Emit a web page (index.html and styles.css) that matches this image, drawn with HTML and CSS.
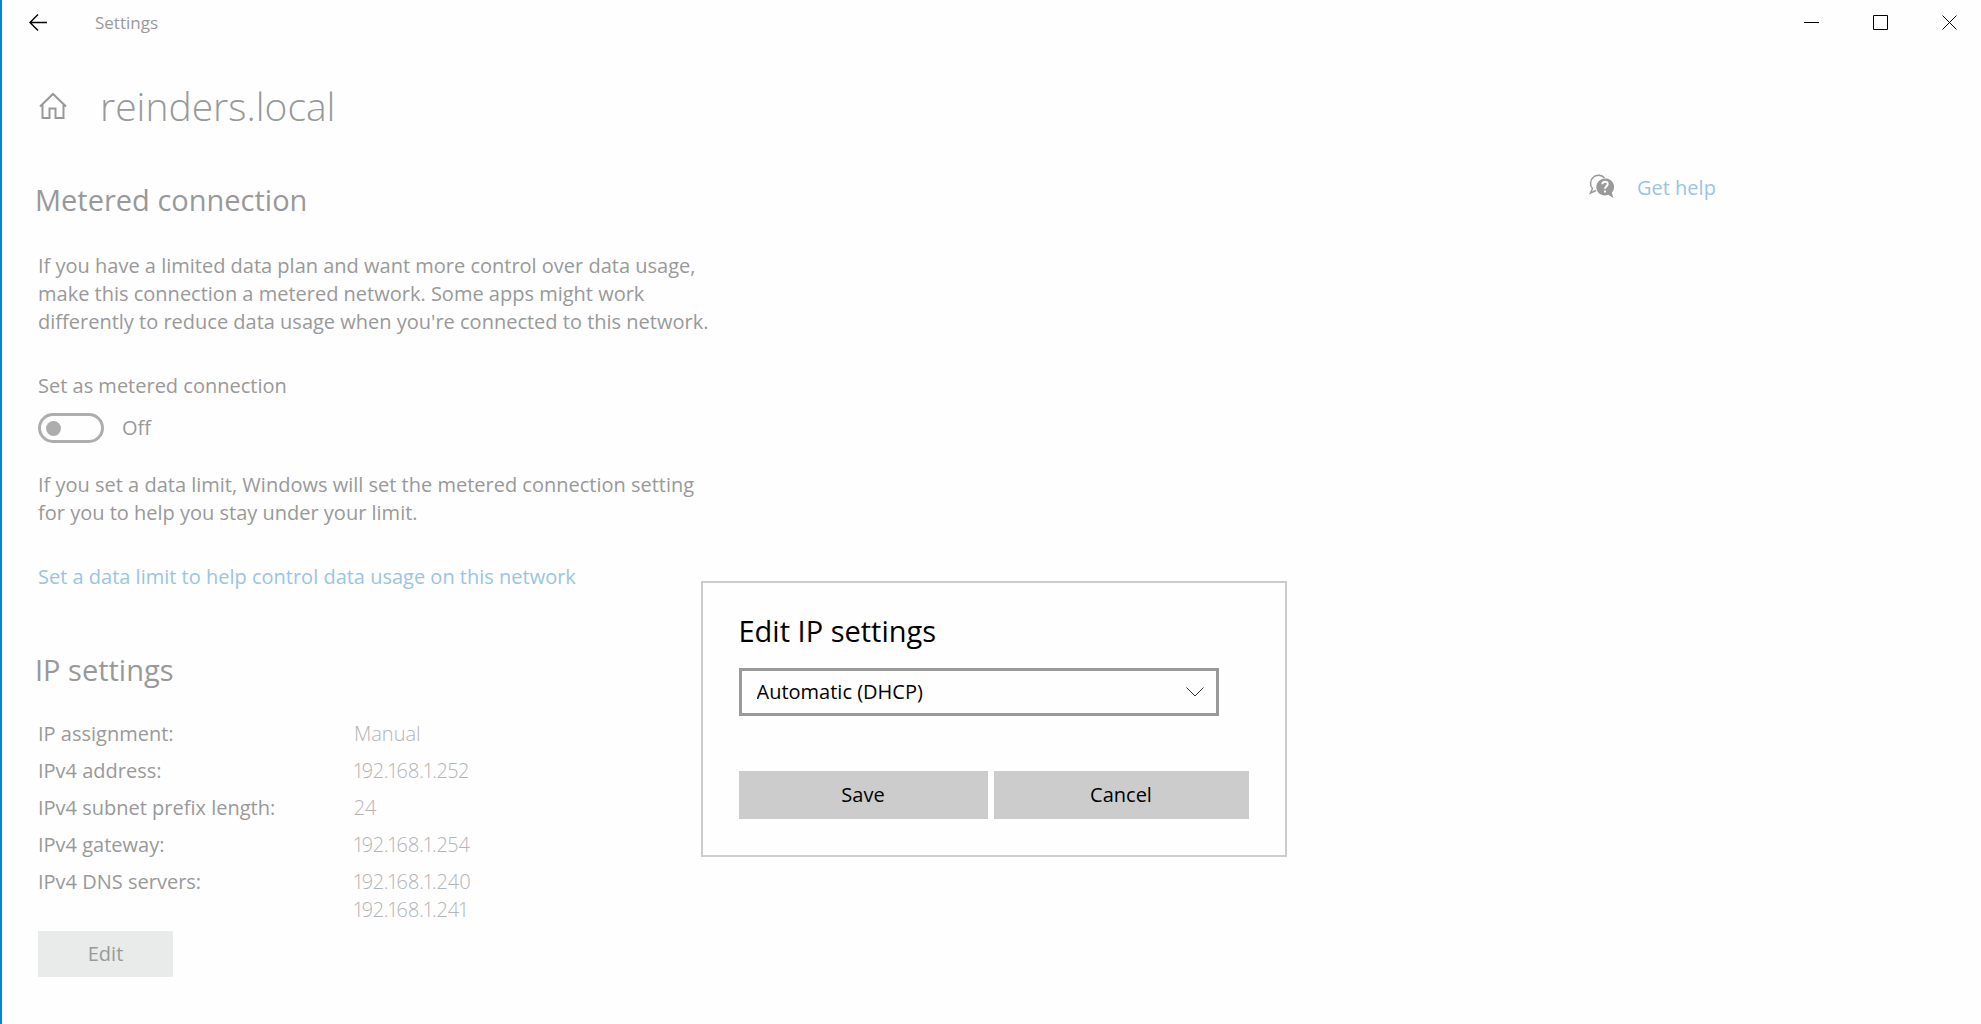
FILE: index.html
```html
<!DOCTYPE html>
<html lang="en">
<head>
<meta charset="utf-8">
<meta name="viewport" content="width=device-width, initial-scale=1">
<title>Settings</title>
<link rel="stylesheet" href="styles.css">
</head>
<body>
<div class="window">
  <header class="titlebar">
    <button class="back" type="button" aria-label="Back">
      <svg width="20" height="20" viewBox="0 0 20 20"><path d="M19 9.5H2M10 1.5L2 9.5l8 8"/></svg>
    </button>
    <span class="app-name">Settings</span>
    <div class="controls">
      <button type="button" aria-label="Minimize"><svg width="16" height="16" viewBox="0 0 16 16"><path d="M0 7.5h15"/></svg></button>
      <button type="button" aria-label="Maximize"><svg width="16" height="16" viewBox="0 0 16 16"><path d="M.5.5h14v14H.5z"/></svg></button>
      <button type="button" aria-label="Close"><svg width="16" height="16" viewBox="0 0 16 16"><path d="M.5.5l14 14M14.500.5l-14 14"/></svg></button>
    </div>
  </header>

  <div class="page-head">
    <svg class="home" width="28" height="28" viewBox="0 0 28 28"><path d="M1 14.500L14 2l13 12.500M3.500 12.500V26h7V16.500h6V26h8V12.500"/></svg>
    <h1>reinders.local</h1>
  </div>

  <div class="body">
    <main>
      <section class="metered">
        <h2>Metered connection</h2>
        <p>If you have a limited data plan and want more control over data usage,<br>make this connection a metered network. Some apps might work<br>differently to reduce data usage when you're connected to this network.</p>
        <div class="toggle-field">
          <label for="metered">Set as metered connection</label>
          <div class="toggle-row">
            <input class="toggle" id="metered" type="checkbox" role="switch">
            <span>Off</span>
          </div>
        </div>
        <p>If you set a data limit, Windows will set the metered connection setting<br>for you to help you stay under your limit.</p>
        <a class="data-limit" href="#">Set a data limit to help control data usage on this network</a>
      </section>

      <section class="ip">
        <h2>IP settings</h2>
        <dl>
          <dt>IP assignment:</dt><dd>Manual</dd>
          <dt>IPv4 address:</dt><dd>192.168.1.252</dd>
          <dt>IPv4 subnet prefix length:</dt><dd>24</dd>
          <dt>IPv4 gateway:</dt><dd>192.168.1.254</dd>
          <dt>IPv4 DNS servers:</dt><dd>192.168.1.240<br>192.168.1.241</dd>
        </dl>
        <button class="edit" type="button">Edit</button>
      </section>
    </main>

    <aside class="help">
      <svg width="25" height="25" viewBox="0 0 25 25">
        <path class="outline" d="M7 16.500L1.500 19l2-4.500A7.500 7.500 0 1 1 15.500 4"/>
        <path class="solid" d="M16 4.500a8.500 8.500 0 1 0 3.200 16.300L24.500 24l-1.700-5.300A8.500 8.500 0 0 0 16 4.500z"/>
        <path class="mark" d="M13.300 10.300c.2-3.600 5.600-3.400 5.400-.1-.1 2-2.700 2-2.700 4.600"/>
        <path class="mark" d="M16 16.500v2"/>
      </svg>
      <a href="#">Get help</a>
    </aside>
  </div>
</div>

<div class="dialog" role="dialog" aria-labelledby="dialog-title">
  <h2 id="dialog-title">Edit IP settings</h2>
  <div class="select-wrap">
    <select aria-labelledby="dialog-title">
      <option>Automatic (DHCP)</option>
      <option>Manual</option>
    </select>
    <svg width="18" height="12" viewBox="0 0 18 12"><path d="M.5 1.500l8.500 8.500 8.500-8.500"/></svg>
  </div>
  <div class="actions">
    <button type="button">Save</button>
    <button type="button">Cancel</button>
  </div>
</div>
</body>
</html>
```

FILE: styles.css
```css
* {
  box-sizing: border-box;
}

body {
  margin: 0;
  background: #fefefe;
  color: #999;
  font: 20px/28px "Open Sans", "Noto Sans", sans-serif;
}

h1, h2, p, dl, dd {
  margin: 0;
}

h2 {
  font-size: 29px;
  line-height: 40px;
  font-weight: 400;
}

a {
  color: #9bc4e2;
  text-decoration: none;
}

button, select {
  font: inherit;
  border: 0;
  border-radius: 0;
}

svg {
  display: block;
  fill: none;
}

.window {
  min-height: 100vh;
  border-left: 2px solid #0086d0;
}

.titlebar {
  display: flex;
  align-items: center;
  height: 45px;
}

.titlebar button {
  display: flex;
  align-items: center;
  justify-content: center;
  width: 62px;
  height: 44px;
  padding: 0;
  background: none;
  stroke: #000;
}

.titlebar .back {
  width: 72px;
}

.back svg {
  stroke-width: 1.4;
}

.app-name {
  margin-left: 21px;
  font-size: 17px;
}

.controls {
  display: flex;
  gap: 7px;
  margin-left: auto;
}

.page-head {
  display: flex;
  align-items: center;
  gap: 33px;
  padding: 33px 37px 0;
}

.home {
  stroke: #999;
  stroke-width: 2;
}

h1 {
  font-size: 39px;
  line-height: 56px;
  font-weight: 300;
}

.body {
  display: grid;
  grid-template-columns: 1fr 392px;
  padding: 40px 0 32px 36px;
}

main {
  padding-top: 6px;
}

main h2 {
  margin-left: -3px;
}

.metered {
  display: flex;
  flex-direction: column;
  align-items: flex-start;
}

.metered h2 {
  margin-bottom: 32px;
}

.toggle-field {
  margin: 36px 0 28px;
}

.toggle-row {
  display: flex;
  align-items: center;
  gap: 18px;
  margin-top: 13px;
}

.toggle {
  appearance: none;
  display: flex;
  align-items: center;
  width: 66px;
  height: 30px;
  margin: 0;
  padding-left: 5px;
  border: 3px solid #adadad;
  border-radius: 15px;
}

.toggle::before {
  content: "";
  width: 15px;
  height: 15px;
  border-radius: 50%;
  background: #adadad;
}

.data-limit {
  margin-top: 36px;
}

.ip h2 {
  margin-top: 59px;
  margin-bottom: 30px;
}

dl {
  display: grid;
  grid-template-columns: 316px 1fr;
  row-gap: 9px;
}

dd {
  color: #b4b4b4;
  font-weight: 300;
  font-variant-numeric: proportional-nums;
}

.edit {
  width: 135px;
  height: 46px;
  margin-top: 7px;
  background: #e9ebea;
  color: #999;
}

.help {
  display: flex;
  align-items: flex-start;
  gap: 23px;
}

.outline {
  stroke: #999;
  stroke-width: 1.5;
}

.solid {
  fill: #999;
}

.mark {
  stroke: #fff;
  stroke-width: 2;
}

.dialog {
  position: absolute;
  top: 581px;
  left: calc(50% - 290px);
  width: 586px;
  padding: 28px 36px 36px;
  border: 2px solid #ccc;
  background: #fefefe;
  color: #000;
}

.select-wrap {
  display: flex;
  align-items: center;
  width: 480px;
  margin-top: 17px;
}

select {
  appearance: none;
  flex: 1;
  height: 48px;
  padding: 0 15px;
  border: 3px solid #999;
  background: #fefefe;
  color: #000;
}

.select-wrap svg {
  margin-left: -33px;
  margin-right: 15px;
  stroke: #333;
  pointer-events: none;
}

.actions {
  display: grid;
  grid-template-columns: 249px 1fr;
  gap: 6px;
  margin-top: 55px;
}

.actions button {
  height: 48px;
  background: #ccc;
  color: #000;
}
```
